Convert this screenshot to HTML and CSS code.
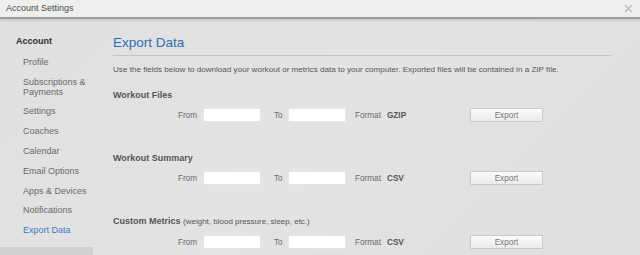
FILE: index.html
```html
<!DOCTYPE html>
<html>
<head>
<meta charset="utf-8">
<link rel="stylesheet" href="styles.css">
</head>
<body>
<div class="window">
  <div class="titlebar">
    <span class="title">Account Settings</span>
    <svg class="close" width="9" height="9" viewBox="0 0 9 9"><path d="M1 1L8 8M8 1L1 8" stroke="#b9b9b9" stroke-width="1.2" fill="none"/></svg>
  </div>
  <div class="main">
    <nav class="sidebar">
      <div class="nav-head">Account</div>
      <div class="nav-item">Profile</div>
      <div class="nav-item">Subscriptions &amp;<br>Payments</div>
      <div class="nav-item">Settings</div>
      <div class="nav-item">Coaches</div>
      <div class="nav-item">Calendar</div>
      <div class="nav-item">Email Options</div>
      <div class="nav-item">Apps &amp; Devices</div>
      <div class="nav-item">Notifications</div>
      <div class="nav-item active">Export Data</div>
      <div class="nav-block"></div>
    </nav>
    <section class="content">
      <h1 class="page-title">Export Data</h1>
      <p class="desc">Use the fields below to download your workout or metrics data to your computer. Exported files will be contained in a ZIP file.</p>

      <div class="export-section">
        <h2 class="sec-head">Workout Files</h2>
        <div class="row">
          <span class="lbl-from">From</span>
          <input class="field" type="text">
          <span class="lbl-to">To</span>
          <input class="field" type="text">
          <span class="lbl-format">Format</span>
          <span class="format-val">GZIP</span>
          <button class="btn">Export</button>
        </div>
      </div>

      <div class="export-section">
        <h2 class="sec-head">Workout Summary</h2>
        <div class="row">
          <span class="lbl-from">From</span>
          <input class="field" type="text">
          <span class="lbl-to">To</span>
          <input class="field" type="text">
          <span class="lbl-format">Format</span>
          <span class="format-val">CSV</span>
          <button class="btn">Export</button>
        </div>
      </div>

      <div class="export-section">
        <h2 class="sec-head">Custom Metrics <span class="sec-note">(weight, blood pressure, sleep, etc.)</span></h2>
        <div class="row">
          <span class="lbl-from">From</span>
          <input class="field" type="text">
          <span class="lbl-to">To</span>
          <input class="field" type="text">
          <span class="lbl-format">Format</span>
          <span class="format-val">CSV</span>
          <button class="btn">Export</button>
        </div>
      </div>
    </section>
  </div>
</div>
</body>
</html>
```
FILE: styles.css
```css
html, body {
  margin: 0;
  padding: 0;
}
body {
  width: 640px;
  height: 255px;
  overflow: hidden;
  font-family: "Liberation Sans", Arial, sans-serif;
  background: #e1e1e1;
}
.window {
  width: 640px;
  height: 255px;
  overflow: hidden;
  display: flex;
  flex-direction: column;
  background: linear-gradient(135deg, #e0e0e0 0%, #e3e3e3 50%, #dfdfdf 100%);
}
.titlebar {
  height: 17px;
  flex: none;
  background: #efefef;
  border-bottom: 2px solid #9c9c9c;
  box-shadow: 0 1px 3px rgba(0,0,0,0.18);
  display: flex;
  align-items: center;
  justify-content: space-between;
  padding: 0 7px 0 6px;
  position: relative;
  z-index: 1;
}
.title {
  font-size: 9px;
  color: #4a4a4a;
  line-height: 17px;
}
.close {
  display: block;
}
.main {
  flex: 1;
  display: flex;
  min-height: 0;
  overflow: hidden;
}
.sidebar {
  width: 93px;
  flex: none;
  padding-top: 12px;
  font-size: 9px;
  box-sizing: border-box;
}
.nav-head {
  font-weight: bold;
  color: #2e2e2e;
  padding: 5px 0 6px 16px;
  line-height: 10px;
}
.nav-item {
  color: #6a6a6a;
  padding: 4.9px 0 4.9px 23px;
  line-height: 10px;
}
.nav-item.active {
  color: #3b7cc2;
}
.nav-block {
  margin-top: 7px;
  height: 8px;
  background: #d1d1d1;
}
.content {
  flex: 1;
  padding: 16px 28px 0 20px;
  box-sizing: border-box;
}
.page-title {
  margin: 0;
  font-weight: normal;
  font-size: 13.5px;
  line-height: 16px;
  color: #2b6fb2;
  padding-bottom: 4px;
  border-bottom: 1px solid #c6c6c6;
}
.desc {
  margin: 9px 0 0 0;
  font-size: 8.1px;
  line-height: 10px;
  color: #555;
  white-space: nowrap;
}
.export-section {
  height: 63px;
}
.export-section:first-of-type {
  margin-top: 14px;
}
.sec-head {
  margin: 0 0 7px 0;
  font-size: 9px;
  line-height: 12px;
  font-weight: bold;
  color: #555;
}
.sec-note {
  font-weight: normal;
  font-size: 8px;
}
.row {
  display: flex;
  align-items: center;
  height: 14px;
  font-size: 8.2px;
  color: #6a6a6a;
}
.lbl-from {
  width: 84px;
  text-align: right;
  margin-right: 6px;
}
.field {
  width: 58px;
  height: 14px;
  box-sizing: border-box;
  margin: 0;
  padding: 0;
  border: 1px solid #e6e6e6;
  background: #fff;
  outline: none;
}
.lbl-to {
  width: 14px;
  margin-left: 13px;
}
.lbl-format {
  width: 32px;
  margin-left: 9px;
}
.format-val {
  width: 83px;
  font-weight: bold;
  color: #555;
}
.btn {
  width: 73px;
  height: 14px;
  box-sizing: border-box;
  margin: 0;
  padding: 0;
  font-family: "Liberation Sans", Arial, sans-serif;
  font-size: 8.2px;
  color: #777;
  border: 1px solid #c9c9c9;
  border-radius: 1px;
  background: linear-gradient(#fbfbfb, #ebebeb);
}
```
